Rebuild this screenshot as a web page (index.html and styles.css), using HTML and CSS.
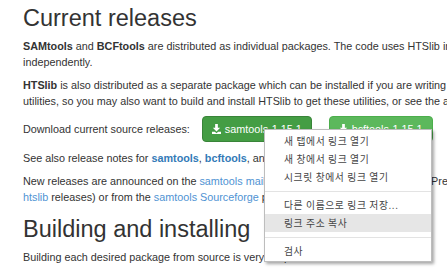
FILE: index.html
```html
<!DOCTYPE html>
<html lang="en">
  <head>
    <meta charset="UTF-8" />
    <meta name="viewport" content="width=device-width, initial-scale=1.0" />
    <title>Download - HTSlib</title>
    <link rel="stylesheet" href="styles.css">
  </head>
  <body>
    <main class="page">
      <h2 class="title">Current releases</h2>
      <p>
        <b>SAMtools</b> and <b>BCFtools</b> are distributed as individual packages. The code uses HTSlib internally, but these source packages contain their own copies of htslib so they can be built<br>
        independently.
      </p>
      <p>
        <b>HTSlib</b> is also distributed as a separate package which can be installed if you are writing your own programs against the HTSlib API. HTSlib also contains the bgzip and tabix<br>
        utilities, so you may also want to build and install HTSlib to get these utilities, or see the additional instructions below.
      </p>

      <!-- download buttons -->
      <div class="downloads">
        <span>Download current source releases:</span>
        <a class="btn btn-hover" href="#">
          <svg class="icon" viewBox="0 0 10 11"><path d="M3.5 0h3v4.2h2.6L5 8.3 0.9 4.2h2.6z M0 8.6h3.2l1.8 1.6 1.8-1.6H10V11H0z" /></svg>
          samtools-1.15.1
        </a>
        <a class="btn" href="#">
          <svg class="icon" viewBox="0 0 10 11"><path d="M3.5 0h3v4.2h2.6L5 8.3 0.9 4.2h2.6z M0 8.6h3.2l1.8 1.6 1.8-1.6H10V11H0z" /></svg>
          bcftools-1.15.1
        </a>
        <a class="btn" href="#">htslib-1.15.1</a>
      </div>

      <p>
        See also release notes for <a class="strong" href="#">samtools</a>, <a class="strong" href="#">bcftools</a>, and <a class="strong" href="#">htslib</a>.
      </p>
      <p>
        New releases are announced on the <a href="#">samtools mailing lists</a> and by <a href="#">@htslib</a> on Twitter. Previous releases are available from GitHub (<a href="#">samtools</a>, <a href="#">bcftools</a>,<br>
        <a href="#">htslib</a> releases) or from the <a href="#">samtools Sourceforge</a> project page.
      </p>

      <h2 class="title title-sub">Building and installing</h2>
      <p>Building each desired package from source is very simple:</p>
    </main>

    <!-- right-click menu -->
    <div class="menu">
      <div class="menu-item">새 탭에서 링크 열기</div>
      <div class="menu-item">새 창에서 링크 열기</div>
      <div class="menu-item">시크릿 창에서 링크 열기</div>
      <div class="menu-sep"></div>
      <div class="menu-item">다른 이름으로 링크 저장...</div>
      <div class="menu-item active">링크 주소 복사</div>
      <div class="menu-sep"></div>
      <div class="menu-item">검사</div>
    </div>
  </body>
</html>
```

FILE: styles.css
```css
html,
body {
  overflow: hidden;
}

body {
  margin: 0;
  background: #fff;
  color: #333;
  font-family: "Liberation Sans", Arial, sans-serif;
  font-size: 10.8px;
  line-height: 16px;
}

.page {
  padding-left: 23px;
  white-space: nowrap;
}

.title {
  margin: 5px 0 7px;
  font-size: 23.5px;
  font-weight: normal;
  line-height: 26px;
}

.title-sub {
  margin-top: 11px;
}

p {
  margin: 0 0 7px;
}

a {
  color: #4f93d3;
  text-decoration: none;
}

a.strong {
  color: #337ab7;
  font-weight: bold;
}

.downloads {
  display: flex;
  align-items: center;
  margin: 0 0 8px;
}

.btn {
  display: inline-flex;
  align-items: center;
  gap: 4px;
  height: 26px;
  box-sizing: border-box;
  padding: 0 9px;
  margin-left: 17px;
  border: 1px solid #4cae4c;
  border-radius: 4px;
  background: #5cb85c;
  color: #fff;
  font-size: 10.8px;
}

.downloads span + .btn {
  margin-left: 12px;
}

.btn-hover {
  background: #449d44;
  border-color: #398439;
}

.icon {
  width: 9px;
  height: 10px;
  fill: #fff;
}

.menu {
  position: absolute;
  left: 264px;
  top: 129px;
  width: 166px;
  padding: 2px 0 1px;
  background: #fff;
  border: 1px solid #bdbdbd;
  box-shadow: 2px 2px 3px rgba(0, 0, 0, 0.35);
  font-family: "Noto Sans CJK KR", sans-serif;
  font-size: 9.8px;
  letter-spacing: 0.6px;
  color: #444;
}

.menu-item {
  height: 18px;
  line-height: 18px;
  padding-left: 19px;
}

.menu-item.active {
  background: #e6e6e6;
}

.menu-sep {
  height: 1px;
  margin: 5px 0 4px;
  background: #e3e3e3;
}
```
